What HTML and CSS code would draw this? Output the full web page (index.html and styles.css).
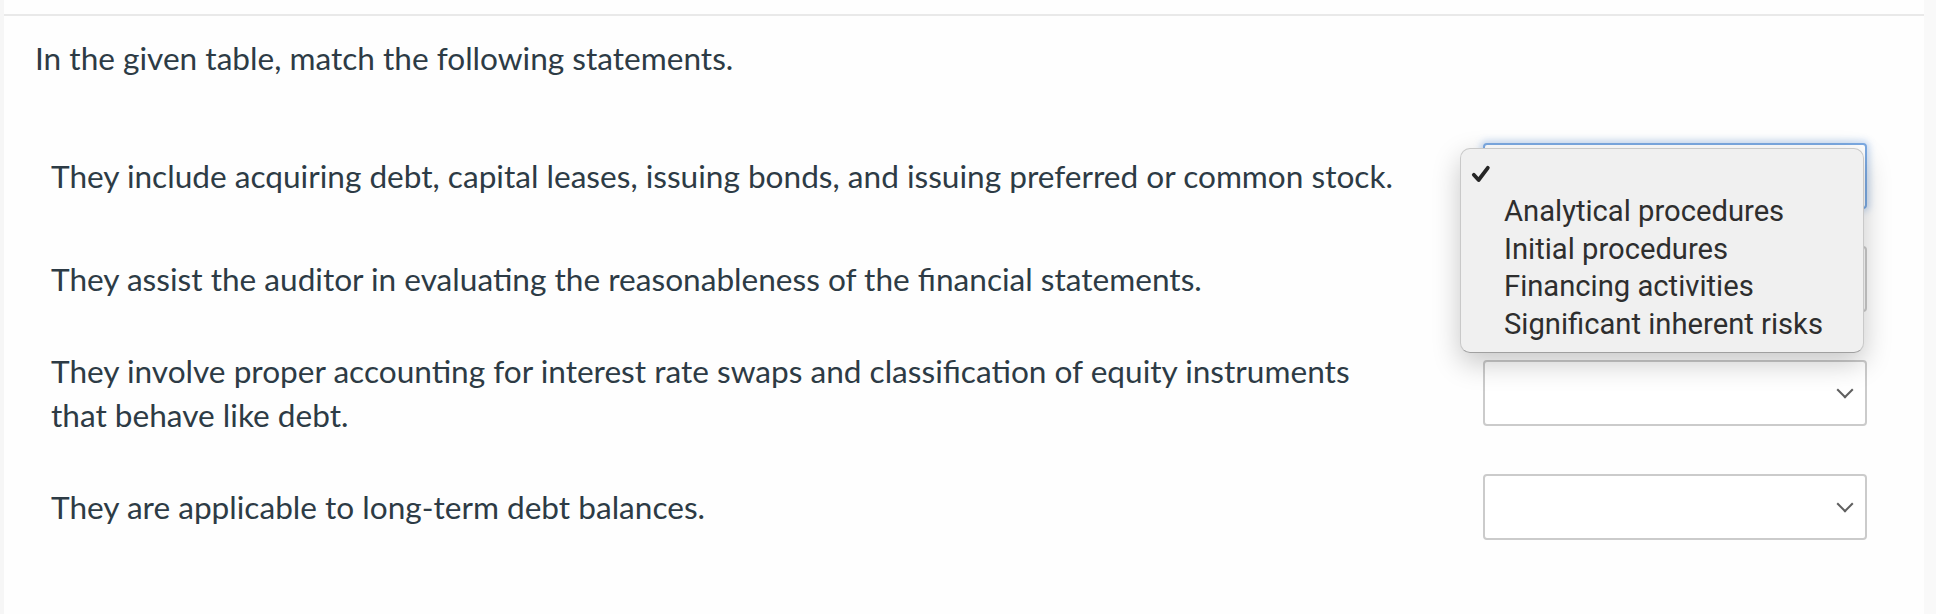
FILE: index.html
```html
<!DOCTYPE html>
<html lang="en">
<head>
<meta charset="utf-8">
<title>Matching question</title>
<link rel="stylesheet" href="styles.css">
</head>
<body>
<div class="page">
  <div class="side-left"></div>
  <main class="content">
    <section class="question">
      <p class="prompt">In the given table, match the following statements.</p>
      <div class="rows">
        <div class="row">
          <div class="stmt">They include acquiring debt, capital leases, issuing bonds, and issuing preferred or common stock.</div>
          <div class="select focused"></div>
        </div>
        <div class="row">
          <div class="stmt">They assist the auditor in evaluating the reasonableness of the financial statements.</div>
          <div class="select"><span class="chev"></span></div>
        </div>
        <div class="row">
          <div class="stmt">They involve proper accounting for interest rate swaps and classification of equity instruments that behave like debt.</div>
          <div class="select"><span class="chev"></span></div>
        </div>
        <div class="row">
          <div class="stmt">They are applicable to long-term debt balances.</div>
          <div class="select"><span class="chev"></span></div>
        </div>
      </div>
    </section>
    <ul class="menu">
      <li class="opt checked"><svg class="tick" width="20" height="20" viewBox="0 0 20 20"><path d="M2.8 10.8 L7.6 16 L16.8 3.8" fill="none" stroke="#262626" stroke-width="3.8" stroke-linecap="round" stroke-linejoin="round"/></svg></li>
      <li class="opt">Analytical procedures</li>
      <li class="opt">Initial procedures</li>
      <li class="opt">Financing activities</li>
      <li class="opt">Significant inherent risks</li>
    </ul>
  </main>
  <div class="side-right"></div>
</div>
</body>
</html>
```
FILE: styles.css
```css
html, body {
  margin: 0;
  padding: 0;
  background: #ffffff;
}
.page {
  display: flex;
  width: 1936px;
  height: 614px;
  overflow: hidden;
}
.side-left {
  width: 4px;
  background: #f6f6f6;
  flex: none;
}
.side-right {
  width: 12px;
  background: #f9f9f9;
  flex: none;
}
.content {
  flex: 1;
  position: relative;
  padding-top: 14px;
  background: #fefefe;
}
.question {
  border-top: 2px solid #e9e9e9;
  padding-left: 31px;
  font-family: Lato, "Open Sans", sans-serif;
  color: #2d3b45;
  font-size: 31.6px;
  line-height: 44px;
}
.prompt {
  margin: 20px 0 0 0;
}
.rows {
  margin-top: 63px;
  padding-left: 16px;
  display: flex;
  flex-direction: column;
  gap: 37px;
}
.row {
  display: flex;
  align-items: center;
}
.stmt {
  width: 1356px;
  flex: none;
}
.select {
  margin-left: 76px;
  width: 384px;
  height: 66px;
  box-sizing: border-box;
  border: 2px solid #cbcbcb;
  border-radius: 4px;
  background: #ffffff;
  position: relative;
  flex: none;
}
.select.focused {
  border-color: #7ba9e2;
  box-shadow: 0 0 6px 3px rgba(120, 165, 225, 0.35);
}
.chev {
  position: absolute;
  right: 14px;
  top: 22px;
  width: 10px;
  height: 10px;
  border-right: 2px solid #5f5f5f;
  border-bottom: 2px solid #5f5f5f;
  transform: rotate(45deg);
}
.menu {
  position: absolute;
  left: 1456px;
  top: 148px;
  width: 404px;
  height: 205px;
  box-sizing: border-box;
  margin: 0;
  padding: 6px 0 0 0;
  list-style: none;
  background: #f0f0f0;
  border: 1px solid #c9c9c9;
  border-bottom-color: #a0a0a0;
  border-radius: 10px;
  box-shadow: 0 10px 28px rgba(0, 0, 0, 0.22);
  font-family: Roboto, "Liberation Sans", sans-serif;
  font-size: 29.2px;
  color: #2e2e2e;
}
.opt {
  height: 37.8px;
  line-height: 37.8px;
  padding-left: 43px;
  position: relative;
}
.tick {
  position: absolute;
  left: 10px;
  top: 9px;
}
```
